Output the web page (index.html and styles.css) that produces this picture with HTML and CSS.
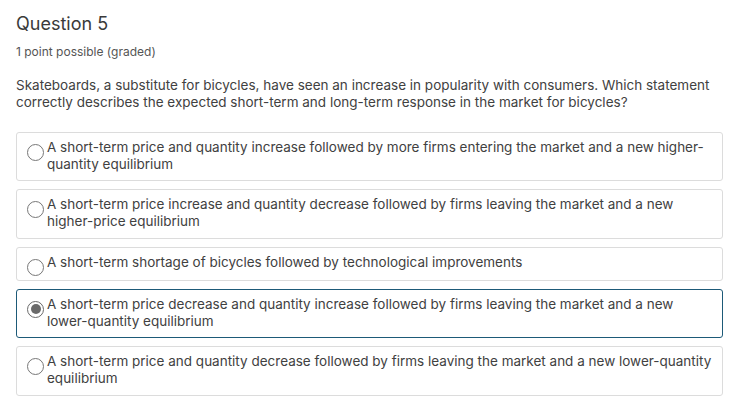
FILE: index.html
```html
<!DOCTYPE html>
<html>
<head>
<meta charset="utf-8">
<link rel="stylesheet" href="styles.css">
</head>
<body>
<div class="problem">
  <h3 class="title">Question 5</h3>
  <div class="points">1 point possible (graded)</div>
  <p class="prompt">Skateboards, a substitute for bicycles, have seen an increase in popularity with consumers. Which statement correctly describes the expected short-term and long-term response in the market for bicycles?</p>
  <div class="choices">
    <label class="choice"><span class="radio"></span><span class="text">A short-term price and quantity increase followed by more firms entering the market and a new higher-quantity equilibrium</span></label>
    <label class="choice"><span class="radio"></span><span class="text">A short-term price increase and quantity decrease followed by firms leaving the market and a new higher-price equilibrium</span></label>
    <label class="choice"><span class="radio"></span><span class="text">A short-term shortage of bicycles followed by technological improvements</span></label>
    <label class="choice selected"><span class="radio checked"></span><span class="text">A short-term price decrease and quantity increase followed by firms leaving the market and a new lower-quantity equilibrium</span></label>
    <label class="choice"><span class="radio"></span><span class="text">A short-term price and quantity decrease followed by firms leaving the market and a new lower-quantity equilibrium</span></label>
  </div>
</div>
</body>
</html>
```
FILE: styles.css
```css
* { box-sizing: border-box; }
html, body { margin: 0; padding: 0; background: #fff; }
body {
  font-family: Inter, "Noto Sans", Arial, sans-serif;
  color: #414141;
}
.problem {
  padding: 14px 17px 0 16px;
}
.title {
  margin: 0;
  font-size: 18px;
  line-height: 20px;
  font-weight: 400;
  color: #3a3a3a;
}
.points {
  margin-top: 11px;
  font-size: 12px;
  line-height: 14px;
  color: #555;
}
.prompt {
  margin: 18px 0 0 0;
  font-size: 13.5px;
  line-height: 17px;
}
.choices {
  margin-top: 21px;
  display: flex;
  flex-direction: column;
  gap: 8px;
}
.choice {
  display: flex;
  align-items: flex-start;
  border: 1px solid #dcdcdc;
  border-radius: 3px;
  padding: 6px 10px 8px 10px;
  font-size: 13.5px;
  line-height: 16.7px;
}
.choice.selected {
  border-color: #1d5a78;
}
.radio {
  flex: none;
  width: 17px;
  height: 17px;
  margin-top: 5px;
  margin-bottom: -4px;
  margin-right: 3px;
  border: 1px solid #777;
  border-radius: 50%;
  display: flex;
  align-items: center;
  justify-content: center;
}
.radio.checked {
  border: 1.5px solid #6a6a6a;
}
.radio.checked::after {
  content: "";
  width: 10px;
  height: 10px;
  border-radius: 50%;
  background: #6a6a6a;
}
.text { flex: 1; }
```
